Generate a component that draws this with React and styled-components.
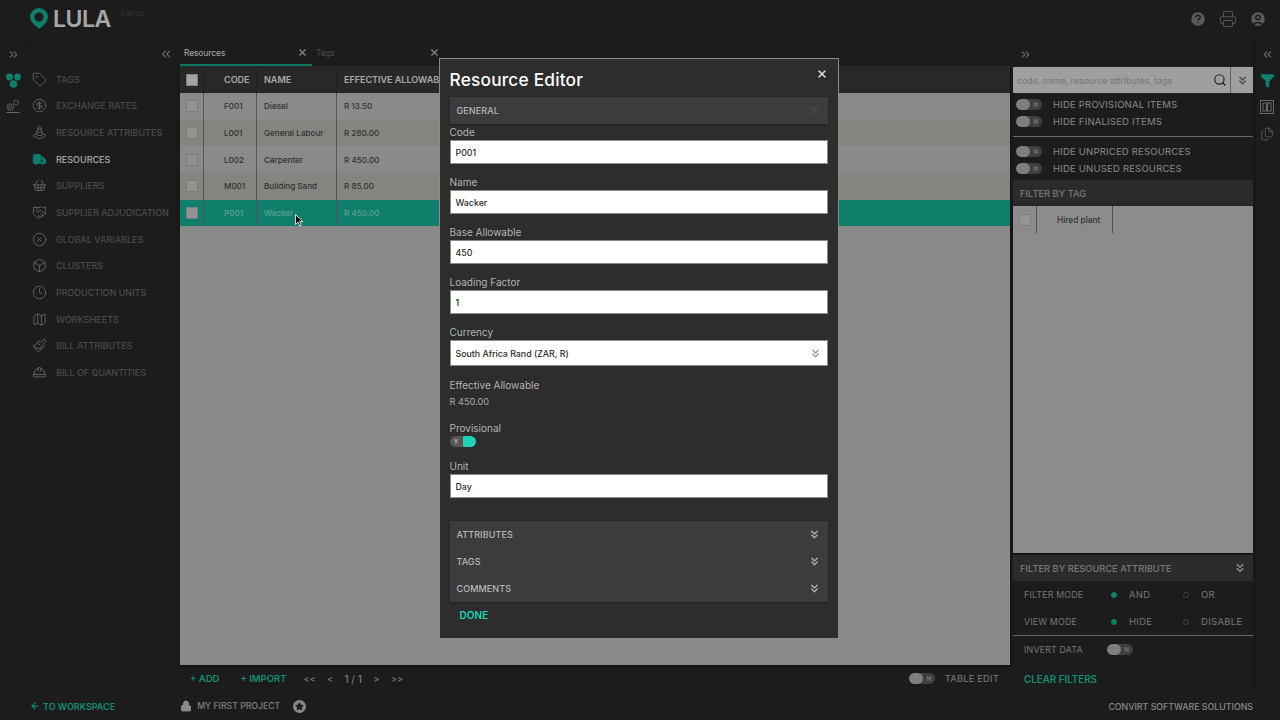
import React from 'react';
import styled, { createGlobalStyle } from 'styled-components';
import {
  Tag, CircleDollarSign, TrafficCone, Truck, ShoppingBasket, Handshake, CircleX, Box, Clock, Map as MapIcon,
  Paintbrush, HardHat, ChevronsLeft, ChevronsRight, ChevronsDown, ChevronsUp, X, Search, Funnel, Files,
  CircleHelp, Printer, CircleUser, ArrowLeft, Lock, Star
} from 'lucide-react';

const FONT = `Inter, "Noto Sans", "Liberation Sans", sans-serif`;
const TEAL = '#1fd4b4';
const UNDER_TEAL = '#17c3a6';

const Global = createGlobalStyle`
  html, body { margin: 0; padding: 0; background: #2b2b2b; }
  * { box-sizing: border-box; }
  body { font-family: ${FONT}; width: 1280px; height: 720px; overflow: hidden; }
`;

const Page = styled.div`
  position: relative;
  width: 1280px;
  height: 720px;
  display: flex;
  flex-direction: column;
  background: #2b2b2b;
  color: #b8b8b8;
`;

/* top header */
const Header = styled.header`
  height: 41px;
  flex: none;
  display: flex;
  align-items: center;
  padding: 0 13px 3px 30px;
  border-bottom: 1px solid #232323;
`;
const LogoText = styled.span`
  margin-left: 5px;
  font-size: 23px;
  font-weight: 600;
  letter-spacing: -0.5px;
  color: #fff;
`;
const Version = styled.span`
  margin: 0 0 10px 10px;
  font-size: 6px;
  color: #555;
`;
const HeaderIcons = styled.div`
  margin-left: auto;
  display: flex;
  align-items: center;
  gap: 12px;
  color: #8c8c8c;
`;

/* page body */
const Body = styled.div`
  flex: 1;
  min-height: 0;
  display: flex;
`;
const LeftRail = styled.div`
  width: 27px;
  flex: none;
  display: flex;
  flex-direction: column;
  align-items: center;
  border-right: 1px solid #252525;
`;
const RailToggle = styled.div`
  height: 26px;
  display: flex;
  align-items: center;
  justify-content: center;
  color: #a0a0a0;
`;
const RailIcon = styled.div`
  height: 26.67px;
  display: flex;
  align-items: center;
  justify-content: center;
  color: ${p => (p.$on ? UNDER_TEAL : '#a0a0a0')};
`;
const NavPanel = styled.nav`
  width: 153px;
  flex: none;
`;
const NavTop = styled.div`
  height: 25px;
  display: flex;
  align-items: center;
  justify-content: flex-end;
  padding-right: 7px;
  color: #a0a0a0;
`;
const NavItem = styled.div`
  height: 26.67px;
  display: flex;
  align-items: center;
  gap: 9px;
  padding-left: 5px;
  font-size: 9px;
  font-weight: 500;
  white-space: nowrap;
  color: ${p => (p.$on ? '#fff' : '#727272')};
  svg { flex: none; color: ${p => (p.$on ? UNDER_TEAL : '#aaa')}; }
`;

/* centre */
const Main = styled.main`
  width: 830px;
  flex: none;
  display: flex;
  flex-direction: column;
`;
const Tabs = styled.div`
  height: 25px;
  flex: none;
  display: flex;
`;
const TabItem = styled.div`
  width: ${p => p.$w}px;
  display: flex;
  align-items: center;
  justify-content: space-between;
  padding: 0 4px;
  font-size: 8.3px;
  color: ${p => (p.$on ? '#fff' : '#747474')};
  border-bottom: 2px solid ${p => (p.$on ? UNDER_TEAL : 'transparent')};
  svg { color: #d0d0d0; }
`;
const TableArea = styled.div`
  flex: 1;
  min-height: 0;
  background: #d4d4d4;
  box-shadow: 0 1px 3px rgba(0, 0, 0, 0.5);
`;
const HeadRow = styled.div`
  height: 27px;
  display: flex;
  font-size: 9px;
  font-weight: 600;
  background: #3e3e3e;
  color: #fff;
`;
const Row = styled.div`
  height: 26.67px;
  display: flex;
  font-size: 8.1px;
  font-weight: 500;
  background: ${p => (p.$on ? UNDER_TEAL : p.$tint ? '#cdcdc5' : 'transparent')};
  color: ${p => (p.$on ? '#90f5e0' : '#4c4c4c')};
`;
const Cell = styled.div`
  width: ${p => p.$w}px;
  flex: ${p => (p.$w ? 'none' : 1)};
  display: flex;
  align-items: center;
  justify-content: ${p => (p.$center ? 'center' : 'flex-start')};
  padding-left: ${p => (p.$center ? 0 : p.$pad || 7)}px;
  border-right: ${p => (p.$w ? `1px solid ${p.$head ? '#343434' : '#808080'}` : 'none')};
`;
const Check = styled.span`
  width: 12px;
  height: 12px;
  background: ${p => (p.$head ? '#fff' : '#e2e2e2')};
  border: 1px solid #c4c4c4;
`;
const BottomBar = styled.div`
  height: 27px;
  flex: none;
  display: flex;
  align-items: center;
  padding: 0 11px 0 10px;
  font-size: 9.5px;
  font-weight: 600;
`;
const GreenLink = styled.span`
  color: ${TEAL};
  margin-right: ${p => p.$mr || 0}px;
  white-space: nowrap;
`;
const Pager = styled.div`
  display: flex;
  align-items: center;
  gap: 11.5px;
  color: #b8b8b8;
  font-size: 9px;
  font-weight: 500;
  strong { font-size: 10px; font-weight: 500; }
`;
const TableEdit = styled.div`
  margin-left: auto;
  display: flex;
  align-items: center;
  gap: 10px;
  font-weight: 500;
  font-size: 9.3px;
  letter-spacing: 0.2px;
  color: #aaa;
`;
const Track = styled.span`
  width: 26px;
  height: 11px;
  flex: none;
  display: flex;
  border-radius: 6px;
  overflow: hidden;
  background: #626262;
`;
const Thumb = styled.span`
  width: 14px;
  background: #c4c4c4;
  border-radius: 6px;
`;
const TrackLabel = styled.span`
  flex: 1;
  text-align: center;
  font-size: 6px;
  line-height: 11px;
  font-weight: 700;
  color: #b0b0b0;
`;

/* filters */
const FilterPanel = styled.aside`
  width: 240px;
  margin-left: 3px;
  flex: none;
  display: flex;
  flex-direction: column;
`;
const FilterTop = styled.div`
  height: 26px;
  flex: none;
  display: flex;
  align-items: center;
  padding-left: 6px;
  color: #a0a0a0;
`;
const SearchBox = styled.div`
  height: 26px;
  flex: none;
  display: flex;
  align-items: center;
  background: #f4f4f4;
  font-size: 8.8px;
  color: #b8b8b8;
  padding-left: 4px;
`;
const SearchIcons = styled.div`
  margin-left: auto;
  height: 100%;
  display: flex;
  align-items: center;
  color: #333;
`;
const SearchDrop = styled.span`
  width: 23px;
  height: 100%;
  margin-left: 3px;
  display: flex;
  align-items: center;
  justify-content: center;
  border-left: 1px solid #999;
  color: #777;
`;
const ToggleGroup = styled.div`
  padding: 3px 0 3px 3px;
  display: flex;
  flex-direction: column;
`;
const ToggleRow = styled.div`
  height: 17px;
  display: flex;
  align-items: center;
  gap: 11px;
  font-size: 9.5px;
  letter-spacing: 0.2px;
  color: #d0d0d0;
`;
const Rule = styled.div`
  height: 1px;
  flex: none;
  margin: ${p => p.$m || '0'};
  background: #a0a0a0;
`;
const SectionBar = styled.div`
  height: 26px;
  flex: none;
  display: flex;
  align-items: center;
  justify-content: space-between;
  margin-top: ${p => p.$mt || 0}px;
  padding: 0 6px 0 7px;
  background: #424242;
  font-size: 9.3px;
  font-weight: 500;
  color: #b8b8b8;
`;
const TagList = styled.div`
  flex: 1;
  min-height: 0;
  background: #d8d8d8;
  box-shadow: 0 1px 3px rgba(0, 0, 0, 0.6);
`;
const TagRow = styled.div`
  height: 27px;
  display: flex;
  font-size: 8.3px;
  font-weight: 500;
  color: #4c4c4c;
`;
const ModeGrid = styled.div`
  display: grid;
  grid-template-columns: 84px 72px 1fr;
  padding-left: 11px;
`;
const ModeLabel = styled.div`
  height: 27px;
  display: flex;
  align-items: center;
  font-size: 8.8px;
  letter-spacing: 0.2px;
  color: #b4b4b4;
`;
const ModeOption = styled(ModeLabel)`
  gap: 12px;
  font-size: 9.5px;
  letter-spacing: 0.3px;
`;
const Dot = styled.span`
  width: 6px;
  height: 6px;
  margin-left: 3px;
  border-radius: 50%;
  background: ${p => (p.$on ? UNDER_TEAL : 'transparent')};
  border: 1px solid ${p => (p.$on ? UNDER_TEAL : '#666')};
`;
const InvertRow = styled.div`
  height: 27px;
  display: flex;
  align-items: center;
  padding-left: 11px;
  gap: 24px;
  font-size: 8.8px;
  letter-spacing: 0.2px;
  color: #b4b4b4;
`;
const ClearRow = styled.div`
  height: 29px;
  display: flex;
  align-items: center;
  padding: 4px 0 0 11px;
  font-size: 9.8px;
  font-weight: 600;
`;
const RightRail = styled.div`
  width: 27px;
  flex: none;
  display: flex;
  flex-direction: column;
  align-items: center;
  padding-right: 2px;
  border-left: 3px solid #252525;
  color: #a0a0a0;
`;
const Footer = styled.footer`
  height: 28px;
  flex: none;
  display: flex;
  align-items: center;
  padding: 0 27px 0 30px;
  font-size: 9px;
  font-weight: 500;
`;
const BackLink = styled(GreenLink)`
  display: flex;
  align-items: center;
  gap: 3px;
  font-weight: 600;
`;
const ProjectName = styled.div`
  margin-left: 65px;
  display: flex;
  align-items: center;
  gap: 5px;
  font-size: 8.7px;
  color: #c4c4c4;
  white-space: nowrap;
  svg { color: #d4d4d4; }
`;
const StarBadge = styled.span`
  width: 13px;
  height: 13px;
  margin-left: 8px;
  display: flex;
  align-items: center;
  justify-content: center;
  border-radius: 50%;
  background: #d4d4d4;
`;
const Company = styled.span`
  margin-left: auto;
  font-size: 8.8px;
  color: #d0d0d0;
`;

/* modal */
const Overlay = styled.div`
  position: absolute;
  inset: 0;
  background: rgba(0, 0, 0, 0.35);
  display: flex;
  justify-content: center;
  align-items: flex-start;
  padding: 58px 3px 0 0;
`;
const Cursor = styled.svg`
  position: absolute;
  left: 295px;
  top: 214px;
`;
const Modal = styled.div`
  position: relative;
  width: 400px;
  height: 581px;
  padding: 10px 10px 0;
  background: #2d2d2d;
  border: 1px solid #8a8a8a;
`;
const CloseButton = styled.button`
  position: absolute;
  top: 9px;
  right: 10px;
  padding: 0;
  border: 0;
  background: none;
  display: flex;
  color: #ddd;
`;
const Title = styled.h1`
  margin: 0 0 6px;
  height: 22px;
  font-size: 17.3px;
  line-height: 22px;
  font-weight: 500;
  color: #fff;
  letter-spacing: 0.2px;
`;
const Accordion = styled.div`
  height: 27px;
  display: flex;
  align-items: center;
  justify-content: space-between;
  padding: 0 7px;
  background: #3c3c3e;
  font-size: 9px;
  font-weight: 500;
  letter-spacing: 0.1px;
  color: #b8b8b8;
  box-shadow: 0 1px 2px rgba(0, 0, 0, 0.35);
  svg { color: ${p => (p.$muted ? '#4c4c4e' : '#b0b0b0')}; }
`;
const Field = styled.div`
  margin-top: ${p => p.$mt ?? 11}px;
  font-size: 10px;
  color: #b4b4b4;
`;
const FieldLabel = styled.label`
  display: block;
  height: 15px;
  line-height: 15px;
`;
const Input = styled.div`
  height: ${p => p.$h || 24}px;
  padding: 0 5px;
  display: flex;
  align-items: center;
  justify-content: space-between;
  background: #fff;
  border: 1px solid #8a8a8a;
  font-size: 8.8px;
  font-weight: 500;
  color: #2a2a2a;
  svg { color: #9a9a9a; }
`;
const ValueText = styled.div`
  margin-top: 3px;
  font-size: 9.2px;
  color: #a8a8a8;
`;
const SwitchOn = styled.div`
  width: 26px;
  height: 11px;
  display: flex;
  border-radius: 6px;
  background: #565656;
  overflow: hidden;
`;
const SwitchLabel = styled.span`
  flex: 1;
  text-align: center;
  font-size: 6px;
  line-height: 11px;
  font-weight: 700;
  color: #b4b4b4;
`;
const SwitchKnob = styled.span`
  width: 13px;
  background: ${TEAL};
  border-radius: 2px 6px 6px 2px;
`;
const Done = styled.div`
  margin: 7px 0 0 10px;
  font-size: 10px;
  font-weight: 600;
  letter-spacing: 0.1px;
  color: ${TEAL};
`;
const AccordionStack = styled.div`
  margin-top: 23px;
`;
const GeneralSection = styled.div`
  padding-top: 1px;
`;

const navItems = [
  ['TAGS', Tag], ['EXCHANGE RATES', CircleDollarSign], ['RESOURCE ATTRIBUTES', TrafficCone], ['RESOURCES', Truck, true],
  ['SUPPLIERS', ShoppingBasket], ['SUPPLIER ADJUDICATION', Handshake], ['GLOBAL VARIABLES', CircleX], ['CLUSTERS', Box],
  ['PRODUCTION UNITS', Clock], ['WORKSHEETS', MapIcon], ['BILL ATTRIBUTES', Paintbrush], ['BILL OF QUANTITIES', HardHat],
];

const rows = [
  ['F001', 'Diesel', 'R 13.50'],
  ['L001', 'General Labour', 'R 280.00', 'tint'],
  ['L002', 'Carpenter', 'R 450.00'],
  ['M001', 'Building Sand', 'R 85.00', 'tint'],
  ['P001', 'Wacker', 'R 450.00', 'on'],
];

const Toggle = () => (
  <Track><Thumb /><TrackLabel>N</TrackLabel></Track>
);

const Logo = () => (
  <svg width="18" height="21" viewBox="0 0 18 21">
    <path fillRule="evenodd" fill={UNDER_TEAL} d="M9 0a9 9 0 0 1 9 9c0 5-5 9-8.500 12C6 18 0 14 0 9a9 9 0 0 1 9-9zm0 4.500a4.500 4.500 0 1 0 0 9 4.500 4.500 0 0 0 0-9z" />
  </svg>
);

const ClusterIcon = () => (
  <svg width="15" height="15" viewBox="0 0 15 15" fill="currentColor">
    <circle cx="3.500" cy="4" r="3.400" />
    <circle cx="11.500" cy="4" r="3.400" />
    <circle cx="7.500" cy="11" r="3.800" />
  </svg>
);

const GearsIcon = () => (
  <svg width="14" height="15" viewBox="0 0 14 15" fill="none" stroke="currentColor">
    <circle cx="4.500" cy="8" r="3" strokeWidth="1.600" strokeDasharray="1.200 0.800" />
    <circle cx="4.500" cy="8" r="1" strokeWidth="0.800" />
    <circle cx="10" cy="3.500" r="2.300" strokeWidth="1.400" strokeDasharray="1 0.800" />
    <path d="M0.500 13.500h13" strokeWidth="1" />
  </svg>
);

const PanelsIcon = () => (
  <svg width="14" height="14" viewBox="0 0 14 14" fill="none" stroke="currentColor" strokeWidth="1">
    <rect x="0.500" y="0.500" width="13" height="13" />
    <rect x="3" y="3" width="3.500" height="8" />
    <rect x="7.500" y="3" width="3.500" height="8" />
  </svg>
);

const TextField = ({ label, value, mt }) => (
  <Field $mt={mt}>
    <FieldLabel>{label}</FieldLabel>
    <Input>{value}</Input>
  </Field>
);

function App() {
  return (
    <Page>
      <Global />
      <Header>
        <Logo />
        <LogoText>LULA</LogoText>
        <Version>0.96.120</Version>
        <HeaderIcons>
          <CircleHelp size={18} fill="#8c8c8c" stroke="#2b2b2b" strokeWidth={2} />
          <Printer size={18} strokeWidth={1.25} />
          <CircleUser size={18} fill="#8c8c8c" stroke="#2b2b2b" strokeWidth={2} />
        </HeaderIcons>
      </Header>

      <Body>
        <LeftRail>
          <RailToggle><ChevronsRight size={13} /></RailToggle>
          <RailIcon $on><ClusterIcon /></RailIcon>
          <RailIcon><GearsIcon /></RailIcon>
        </LeftRail>

        <NavPanel>
          <NavTop><ChevronsLeft size={14} /></NavTop>
          {navItems.map(([label, Icon, on]) => (
            <NavItem key={label} $on={on}>
              <Icon size={15} strokeWidth={1.25} fill={on ? UNDER_TEAL : 'none'} />
              {label}
            </NavItem>
          ))}
        </NavPanel>

        <Main>
          <Tabs>
            <TabItem $w={132} $on>Resources <X size={11} strokeWidth={2.500} /></TabItem>
            <TabItem $w={132}>Tags <X size={11} strokeWidth={2.500} /></TabItem>
          </Tabs>
          <TableArea>
            <HeadRow>
              <Cell $w={24} $center $head><Check $head /></Cell>
              <Cell $w={53} $pad={20} $head>CODE</Cell>
              <Cell $w={80} $head>NAME</Cell>
              <Cell>EFFECTIVE ALLOWABLE</Cell>
            </HeadRow>
            {rows.map(([code, name, amount, kind]) => (
              <Row key={code} $on={kind === 'on'} $tint={kind === 'tint'}>
                <Cell $w={24} $center><Check /></Cell>
                <Cell $w={53} $pad={20}>{code}</Cell>
                <Cell $w={80}>{name}</Cell>
                <Cell>{amount}</Cell>
              </Row>
            ))}
          </TableArea>
          <BottomBar>
            <GreenLink $mr={21}>+ ADD</GreenLink>
            <GreenLink $mr={17}>+ IMPORT</GreenLink>
            <Pager>
              <span>&lt;&lt;</span><span>&lt;</span><strong>1 / 1</strong><span>&gt;</span><span>&gt;&gt;</span>
            </Pager>
            <TableEdit><Toggle />TABLE EDIT</TableEdit>
          </BottomBar>
        </Main>

        <FilterPanel>
          <FilterTop><ChevronsRight size={13} /></FilterTop>
          <SearchBox>
            code, name, resource attributes, tags
            <SearchIcons>
              <Search size={14} />
              <SearchDrop><ChevronsDown size={13} strokeWidth={2.500} /></SearchDrop>
            </SearchIcons>
          </SearchBox>
          <ToggleGroup>
            <ToggleRow><Toggle />HIDE PROVISIONAL ITEMS</ToggleRow>
            <ToggleRow><Toggle />HIDE FINALISED ITEMS</ToggleRow>
          </ToggleGroup>
          <Rule $m="3px 0" />
          <ToggleGroup>
            <ToggleRow><Toggle />HIDE UNPRICED RESOURCES</ToggleRow>
            <ToggleRow><Toggle />HIDE UNUSED RESOURCES</ToggleRow>
          </ToggleGroup>
          <SectionBar>FILTER BY TAG <ChevronsUp size={13} color="#4c4c4c" /></SectionBar>
          <TagList>
            <TagRow>
              <Cell $w={24} $center><Check /></Cell>
              <Cell $w={76} $pad={20}>Hired plant</Cell>
            </TagRow>
          </TagList>
          <SectionBar $mt={2}>FILTER BY RESOURCE ATTRIBUTE <ChevronsDown size={14} strokeWidth={2.500} color="#d0d0d0" /></SectionBar>
          <ModeGrid>
            <ModeLabel>FILTER MODE</ModeLabel>
            <ModeOption><Dot $on />AND</ModeOption>
            <ModeOption><Dot />OR</ModeOption>
            <ModeLabel>VIEW MODE</ModeLabel>
            <ModeOption><Dot $on />HIDE</ModeOption>
            <ModeOption><Dot />DISABLE</ModeOption>
          </ModeGrid>
          <Rule />
          <InvertRow>INVERT DATA <Toggle /></InvertRow>
          <ClearRow><GreenLink>CLEAR FILTERS</GreenLink></ClearRow>
        </FilterPanel>

        <RightRail>
          <RailToggle><ChevronsLeft size={13} /></RailToggle>
          <RailIcon $on><Funnel size={15} fill={UNDER_TEAL} /></RailIcon>
          <RailIcon><PanelsIcon /></RailIcon>
          <RailIcon><Files size={14} strokeWidth={1.25} /></RailIcon>
        </RightRail>
      </Body>

      <Footer>
        <BackLink><ArrowLeft size={10} strokeWidth={3} />TO WORKSPACE</BackLink>
        <ProjectName>
          <Lock size={12} fill="#d4d4d4" strokeWidth={1.75} />MY FIRST PROJECT
          <StarBadge><Star size={9} fill="#2b2b2b" stroke="#2b2b2b" /></StarBadge>
        </ProjectName>
        <Company>CONVIRT SOFTWARE SOLUTIONS</Company>
      </Footer>

      <Overlay>
        <Modal>
          <CloseButton><X size={12} strokeWidth={3} /></CloseButton>
          <Title>Resource Editor</Title>
          <Accordion $muted>GENERAL <ChevronsUp size={13} strokeWidth={2.500} /></Accordion>
          <GeneralSection>
            <TextField label="Code" value="P001" mt={0} />
            <TextField label="Name" value="Wacker" />
            <TextField label="Base Allowable" value="450" />
            <TextField label="Loading Factor" value="1" />
            <Field>
              <FieldLabel>Currency</FieldLabel>
              <Input $h={26}>South Africa Rand (ZAR, R) <ChevronsDown size={13} strokeWidth={2.500} /></Input>
            </Field>
            <Field $mt={12}>
              <FieldLabel>Effective Allowable</FieldLabel>
              <ValueText>R 450.00</ValueText>
            </Field>
            <Field $mt={14}>
              <FieldLabel>Provisional</FieldLabel>
              <SwitchOn><SwitchLabel>Y</SwitchLabel><SwitchKnob /></SwitchOn>
            </Field>
            <TextField label="Unit" value="Day" mt={12} />
          </GeneralSection>
          <AccordionStack>
            <Accordion>ATTRIBUTES <ChevronsDown size={13} strokeWidth={2.500} /></Accordion>
            <Accordion>TAGS <ChevronsDown size={13} strokeWidth={2.500} /></Accordion>
            <Accordion>COMMENTS <ChevronsDown size={13} strokeWidth={2.500} /></Accordion>
          </AccordionStack>
          <Done>DONE</Done>
        </Modal>
      </Overlay>

      <Cursor width="9" height="13" viewBox="0 0 9 13">
        <path d="M0.500 0.500v10l2.500-2.300 1.700 3.800 1.600-.7-1.700-3.700h3.300z" fill="#111" stroke="#fff" strokeWidth="0.800" />
      </Cursor>
    </Page>
  );
}

export default App;
